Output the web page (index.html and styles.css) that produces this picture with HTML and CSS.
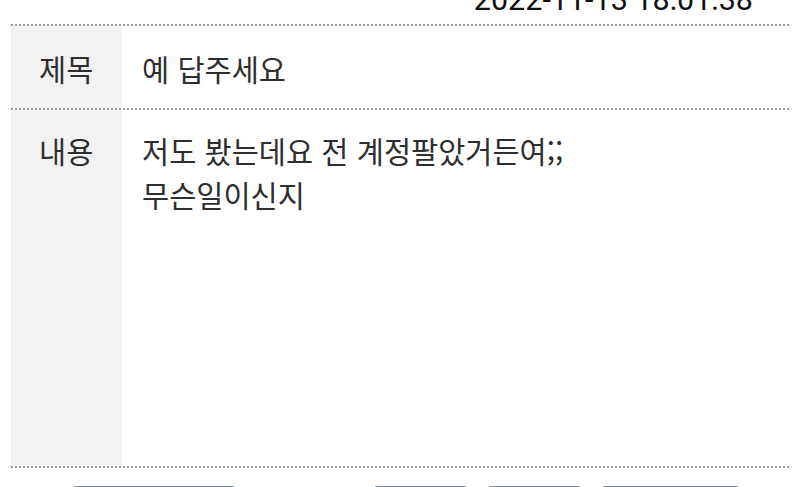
FILE: index.html
```html
<!DOCTYPE html>
<html lang="ko">
<head>
<meta charset="utf-8">
<title>게시글</title>
<link rel="stylesheet" href="styles.css">
</head>
<body>
<div class="page">
  <div class="date">2022-11-13 18:01:38</div>
  <div class="board">
    <div class="row row-title">
      <div class="label">제목</div>
      <div class="value">예 답주세요</div>
    </div>
    <div class="row row-body">
      <div class="label">내용</div>
      <div class="value">저도 봤는데요 전 계정팔았거든여;;<br>무슨일이신지</div>
    </div>
  </div>
  <div class="actions">
    <button class="btn btn-list" type="button"></button>
    <div class="btn-group">
      <button class="btn btn-sm" type="button"></button>
      <button class="btn btn-sm" type="button"></button>
      <button class="btn btn-md" type="button"></button>
    </div>
  </div>
</div>
</body>
</html>
```

FILE: styles.css
```css
html, body {
  margin: 0;
  padding: 0;
  background: #ffffff;
}

.page {
  font-family: Roboto, "Noto Sans CJK KR", sans-serif;
  color: #2e2e2e;
}

.date {
  height: 24px;
  line-height: 0;
  font-size: 30.5px;
  color: #111111;
  text-align: right;
  padding-right: 47px;
}

.board {
  margin: 0 11px;
  border-top: 2px dotted #9a9a9a;
}

.row {
  display: grid;
  grid-template-columns: 111px 1fr;
  border-bottom: 2px dotted #9a9a9a;
  font-size: 29.5px;
  line-height: 44px;
}

.label {
  background: #f2f2f2;
  padding-left: 28px;
  font-family: "Noto Sans CJK KR", sans-serif;
  color: #2e2e2e;
}

.value {
  padding-left: 20px;
  font-family: "Noto Sans CJK KR", sans-serif;
  color: #2e2e2e;
}

.row-title {
  height: 82px;
}

.row-title .label,
.row-title .value {
  padding-top: 20px;
}

.row-body {
  height: 356px;
}

.row-body .label,
.row-body .value {
  padding-top: 18px;
}

.actions {
  display: flex;
  justify-content: space-between;
  margin: 18px 11px 0;
  padding: 0 48px 0 60px;
}

.btn-group {
  display: flex;
  gap: 17px;
}

.btn {
  height: 48px;
  border: 1px solid #7d8c96;
  border-radius: 5px;
  background: #ffffff;
  padding: 0;
}

.btn-list {
  width: 166px;
}

.btn-sm {
  width: 97px;
}

.btn-md {
  width: 141px;
}
```
